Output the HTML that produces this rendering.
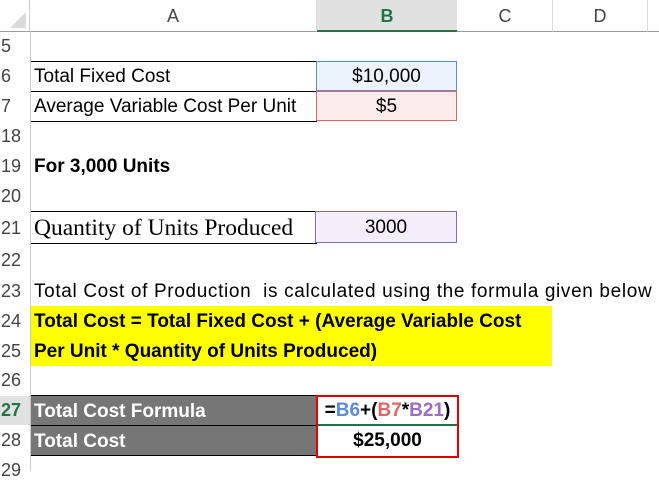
<!DOCTYPE html>
<html><head><style>
body{margin:0;width:659px;height:471px;overflow:hidden;background:#fff;font-family:"Liberation Sans",sans-serif;position:relative}
.a{position:absolute}
.hdr{top:0;height:31px;border-bottom:1px solid #9b9b9b;background:#fff;font-size:18px;color:#444;text-align:center;line-height:33px}
.rn{left:0;width:30px;font-size:18px;color:#444;text-align:left;padding-left:1px;line-height:31px}
.t{font-size:19px;color:#000;left:34px;white-space:nowrap;line-height:32px}
.hl{background:#000;height:1px}
</style></head><body>
<div class="a hdr" style="left:0;width:659px"></div>
<div class="a" style="left:0;top:0;width:29px;height:31px;background:#fff;border-right:1px solid #ccc"></div>
<div class="a" style="left:10px;top:12px;width:0;height:0;border-left:16px solid transparent;border-bottom:16px solid #dadada"></div>
<div class="a hdr" style="left:30px;width:286px;border-right:1px solid #ddd">A</div>
<div class="a hdr" style="left:317px;width:140px;background:#e1e1e1;color:#217346;font-weight:bold;border-bottom:2px solid #217346;height:30px">B</div>
<div class="a hdr" style="left:458px;width:94px;border-right:1px solid #ddd">C</div>
<div class="a hdr" style="left:553px;width:94px;border-right:1px solid #ddd">D</div>
<div class="a" style="left:30px;top:31px;width:1px;height:440px;background:#c8c8c8"></div>

<div class="a rn" style="top:31px">5</div>
<div class="a rn" style="top:61px">6</div>
<div class="a rn" style="top:91px">7</div>
<div class="a rn" style="top:121px">18</div>
<div class="a rn" style="top:151px">19</div>
<div class="a rn" style="top:181px">20</div>
<div class="a rn" style="top:213px">21</div>
<div class="a rn" style="top:245px">22</div>
<div class="a rn" style="top:276px">23</div>
<div class="a rn" style="top:306px">24</div>
<div class="a rn" style="top:336px">25</div>
<div class="a rn" style="top:365px">26</div>
<div class="a rn" style="top:396px;background:#e1e1e1;color:#217346;font-weight:bold;height:29px;width:29px;line-height:29px">27</div>
<div class="a rn" style="top:425px">28</div>
<div class="a rn" style="top:455px">29</div>

<div class="a hl" style="left:31px;top:61px;width:286px"></div>
<div class="a hl" style="left:31px;top:91px;width:286px"></div>
<div class="a hl" style="left:31px;top:121px;width:286px"></div>
<div class="a t" style="top:61px">Total Fixed Cost</div>
<div class="a t" style="top:91px">Average Variable Cost Per Unit</div>
<div class="a" style="left:316px;top:61px;width:139px;height:28px;background:#edf3fc;border:1px solid #5b8bd8;text-align:center;font-size:19px;line-height:30px">$10,000</div>
<div class="a" style="left:316px;top:91px;width:139px;height:28px;background:#fcecec;border:1px solid #e06666;text-align:center;font-size:19px;line-height:30px">$5</div>

<div class="a t" style="top:151px;font-weight:bold">For 3,000 Units</div>

<div class="a hl" style="left:31px;top:211px;width:286px"></div>
<div class="a hl" style="left:31px;top:243px;width:286px"></div>
<div class="a t" style="top:212px;font-family:'Liberation Serif',serif;font-size:23.5px;line-height:32px">Quantity of Units Produced</div>
<div class="a" style="left:315px;top:211px;width:140px;height:30px;background:#f2eefa;border:1px solid #8a67c2;text-align:center;font-size:19px;line-height:32px">3000</div>

<div class="a t" style="top:276px;font-size:19px;letter-spacing:0.65px">Total Cost of Production&nbsp; is calculated using the formula given below</div>
<div class="a" style="left:31px;top:306px;width:521px;height:60px;background:#ffff00"></div>
<div class="a t" style="top:306px;font-weight:bold">Total Cost = Total Fixed Cost + (Average Variable Cost</div>
<div class="a t" style="top:336px;font-weight:bold">Per Unit * Quantity of Units Produced)</div>

<div class="a" style="left:31px;top:396px;width:285px;height:59px;background:#767676"></div>
<div class="a hl" style="left:31px;top:395px;width:285px"></div>
<div class="a hl" style="left:31px;top:425px;width:285px"></div>
<div class="a hl" style="left:31px;top:455px;width:285px"></div>
<div class="a t" style="top:396px;color:#fff;font-weight:bold">Total Cost Formula</div>
<div class="a t" style="top:426px;color:#fff;font-weight:bold">Total Cost</div>
<div class="a" style="left:316px;top:395px;width:139px;height:59px;border:2px solid #e00000"></div>
<div class="a" style="left:318px;top:424px;width:139px;height:2px;background:#217346"></div>
<div class="a" style="left:318px;top:396px;width:139px;text-align:center;font-size:19px;font-weight:bold;line-height:30px">=<span style="color:#5b8bd8">B6</span>+(<span style="color:#e06666">B7</span>*<span style="color:#9b6cc8">B21</span>)</div>
<div class="a" style="left:318px;top:426px;width:139px;text-align:center;font-size:19px;font-weight:bold;line-height:30px">$25,000</div>
</body></html>
